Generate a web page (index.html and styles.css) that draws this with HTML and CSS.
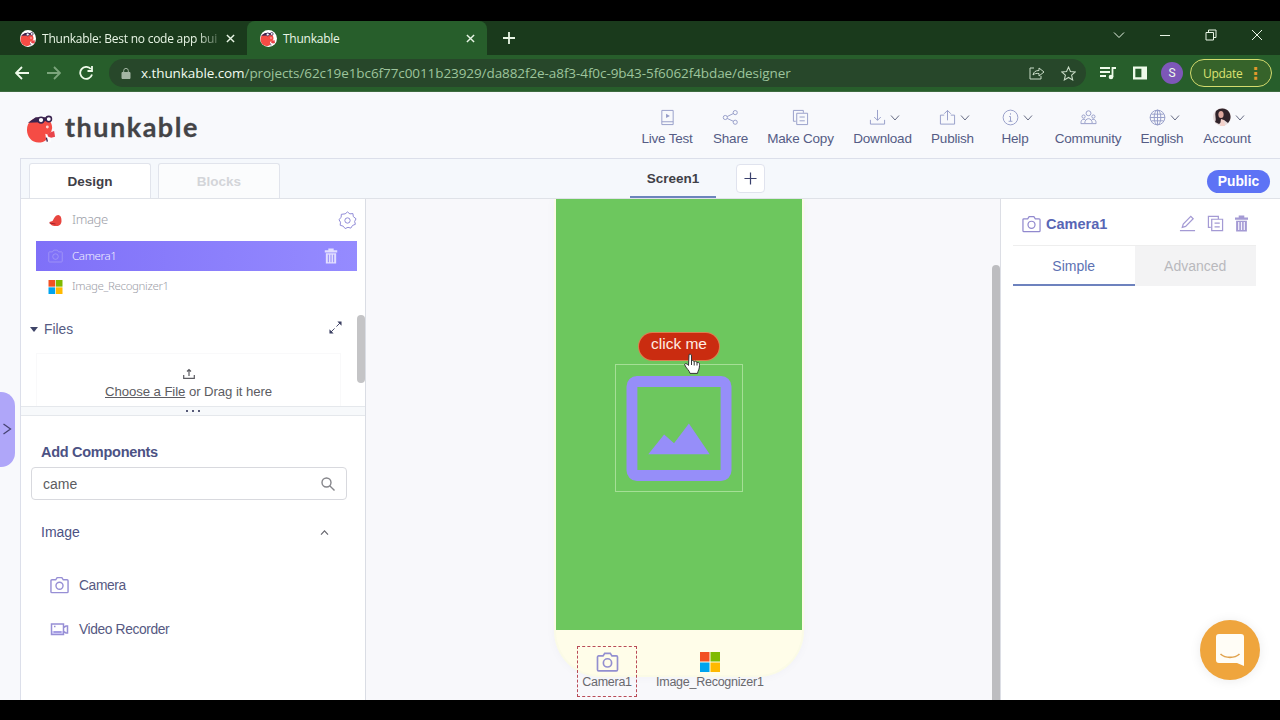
FILE: index.html
```html
<!DOCTYPE html>
<html lang="en">
<head>
  <meta charset="UTF-8">
  <meta name="viewport" content="width=device-width, initial-scale=1.0">
  <title>Thunkable</title>
  <link rel="stylesheet" href="styles.css">
</head>
<body>

  <!-- shared icons -->
  <svg class="sprite">
    <symbol id="beaver" viewBox="0 0 32 32">
      <path d="M1 18C1 10 7 5 15 5c8 0 12 5 12 11l-1 4-4 3-1 5c-2 2-5 3-8 3C6 31 1 25 1 18z" fill="#f54c45"/>
      <path d="M20 22l5 2 1 6-5 1z" fill="#fff"/>
      <path d="M22 23l2-2 5-2 1 6-4 1-3-1z" fill="#e8434a"/>
      <path d="M2 10.500L10 5h14v3l-9 2z" fill="#3a2450"/>
      <circle cx="15.500" cy="7.800" r="3" fill="#fff" stroke="#3a2450" stroke-width="1.600"/>
      <circle cx="23.500" cy="6.800" r="2.800" fill="#fff" stroke="#3a2450" stroke-width="1.600"/>
      <circle cx="22" cy="15" r="1.500" fill="#ffd0d0"/>
      <path d="M21 26l1 4" stroke="#3a2450" stroke-width="1.400"/>
    </symbol>
    <symbol id="camera" viewBox="0 0 20 18">
      <path d="M2 3.500h4l1.500-2.300h5L14 3.500h4a1 1 0 0 1 1 1V16a1 1 0 0 1-1 1H2a1 1 0 0 1-1-1V4.500a1 1 0 0 1 1-1z"/>
      <circle cx="10" cy="9.800" r="3.700"/>
    </symbol>
    <symbol id="chevron" viewBox="0 0 10 8"><path d="M1 1.500l4 4.500 4-4.500"/></symbol>
    <symbol id="close" viewBox="0 0 10 10"><path d="M1 1l8 8M9 1L1 9"/></symbol>
    <symbol id="copy" viewBox="0 0 18 18">
      <path d="M4 13H1.500V1.500H12V4M5 4.500h11.500v12H5zM8 8.500h5.500M8 12.500h5.500"/>
    </symbol>
    <symbol id="trash" viewBox="0 0 14 18">
      <path d="M0 2.500h4V.500h6v2h4v2.500H0zM1.200 6h11.600v11.500H1.200z" fill="currentColor" stroke="none"/>
      <path class="bars" d="M4 7.500v8.500M7 7.500v8.500M10 7.500v8.500"/>
    </symbol>
    <symbol id="windows" viewBox="0 0 20 20">
      <path d="M0 0h9.500v9.500H0z" fill="#f25022"/>
      <path d="M10.500 0H20v9.500h-9.500z" fill="#7fba00"/>
      <path d="M0 10.500h9.500V20H0z" fill="#00a4ef"/>
      <path d="M10.500 10.500H20V20h-9.500z" fill="#ffb900"/>
    </symbol>
  </svg>

  <div class="window">
    <div class="tabstrip">
      <div class="tab">
        <span class="favicon"><svg><use href="#beaver"/></svg></span>
        <span class="tab-title fade">Thunkable: Best no code app bui</span>
        <svg class="tab-close"><use href="#close"/></svg>
      </div>
      <div class="tab active">
        <span class="favicon"><svg><use href="#beaver"/></svg></span>
        <span class="tab-title">Thunkable</span>
        <svg class="tab-close"><use href="#close"/></svg>
      </div>
      <svg class="new-tab" viewBox="0 0 12 12"><path d="M6 0v12M0 6h12"/></svg>
      <div class="controls">
        <svg viewBox="0 0 12 12"><path d="M1 3.500l5 5 5-5"/></svg>
        <svg viewBox="0 0 12 12"><path d="M1 6.500h10"/></svg>
        <svg viewBox="0 0 12 12"><path d="M1 3.500h7.500V11H1zM3.500 3.500V1H11v7.500H8.500"/></svg>
        <svg viewBox="0 0 12 12"><path d="M1 1l10 10M11 1L1 11"/></svg>
      </div>
    </div>

    <div class="toolbar">
      <div class="history">
        <svg viewBox="0 0 14 14"><path d="M14 7H1.500M7 1L1 7l6 6"/></svg>
        <svg class="off" viewBox="0 0 14 14"><path d="M0 7h12.500M7 1l6 6-6 6"/></svg>
        <svg viewBox="0 0 14 14"><path d="M11.800 3A6 6 0 1 0 13 8.500M13 0v5H8.500"/></svg>
      </div>
      <div class="address">
        <svg class="lock" viewBox="0 0 10 12"><path d="M1 5h8v6H1z" fill="#a3b5a3"/><path d="M2.700 5V3.200a2.300 2.300 0 0 1 4.600 0V5"/></svg>
        <span class="url"><b>x.thunkable.com</b>/projects/62c19e1bc6f77c0011b23929/da882f2e-a8f3-4f0c-9b43-5f6062f4bdae/designer</span>
        <svg class="send" viewBox="0 0 16 14"><path d="M5 2H1v11h11v-3M4 9c.500-3 2.500-4.500 6-4.500V2l5 4-5 4V7.500C7.500 7.200 5.500 7.500 4 9z"/></svg>
        <svg class="star" viewBox="0 0 14 14"><path d="M7 1l1.800 4.200 4.500.400-3.400 3 1 4.400L7 10.700 3.100 13l1-4.400-3.400-3 4.500-.400z"/></svg>
      </div>
      <svg class="media" viewBox="0 0 16 14"><path d="M0 2h10M0 6h10M0 10h6M12.500 11V2H16"/><circle cx="11" cy="11" r="2.300"/></svg>
      <svg class="side" viewBox="0 0 15 14"><path d="M0 0h15v14H0zM2.500 2.500v9h6.500v-9z" fill-rule="evenodd"/></svg>
      <span class="profile">S</span>
      <span class="update">Update<i>⋮</i></span>
    </div>

    <div class="app">
      <div class="header">
        <div class="brand">
          <svg class="mascot"><use href="#beaver"/></svg>
          <span>thunkable</span>
        </div>
        <div class="nav">
          <div class="nav-item live">
            <div class="nav-icon"><svg viewBox="0 0 18 18"><path d="M3 1.500h12v15H3zM3 13.500h12"/><path d="M7.500 5v4.500l4-2.200z" fill="#959cc8" stroke="none"/></svg></div>
            <span>Live Test</span>
          </div>
          <div class="nav-item share">
            <div class="nav-icon"><svg viewBox="0 0 18 18"><circle cx="3.500" cy="9" r="2.200"/><circle cx="14" cy="3.800" r="2.200"/><circle cx="14" cy="14" r="2.200"/><path d="M5.500 8l6.500-3.200M5.500 10l6.500 3"/></svg></div>
            <span>Share</span>
          </div>
          <div class="nav-item copy">
            <div class="nav-icon"><svg><use href="#copy"/></svg></div>
            <span>Make Copy</span>
          </div>
          <div class="nav-item download">
            <div class="nav-icon"><svg viewBox="0 0 18 18"><path d="M9 1v11M5.500 8.500L9 12l3.500-3.500M1.500 11.500V16h15v-4.500"/></svg><svg class="chev"><use href="#chevron"/></svg></div>
            <span>Download</span>
          </div>
          <div class="nav-item publish">
            <div class="nav-icon"><svg viewBox="0 0 18 18"><path d="M9 12V1.500M5.500 5L9 1.500 12.500 5M5.500 6.500h-4V16h15V6.500h-4"/></svg><svg class="chev"><use href="#chevron"/></svg></div>
            <span>Publish</span>
          </div>
          <div class="nav-item help">
            <div class="nav-icon"><svg viewBox="0 0 18 18"><circle cx="9" cy="9" r="7.800"/><path d="M7.500 8H9v5M7 13h4M9 4.500v1.500"/></svg><svg class="chev"><use href="#chevron"/></svg></div>
            <span>Help</span>
          </div>
          <div class="nav-item community">
            <div class="nav-icon"><svg viewBox="0 0 18 18"><circle cx="9" cy="4.500" r="2.600"/><circle cx="3.800" cy="8" r="1.700"/><circle cx="14.200" cy="8" r="1.700"/><path d="M5 15.500c0-7 8-7 8 0zM5 15.500H1c0-3 .500-5 4.500-4.500M13 15.500h4c0-3-.500-5-4.500-4.500"/></svg></div>
            <span>Community</span>
          </div>
          <div class="nav-item english">
            <div class="nav-icon"><svg viewBox="0 0 18 18"><circle cx="9" cy="9" r="7.800"/><ellipse cx="9" cy="9" rx="3.500" ry="7.800"/><path d="M9 1.200v15.600M1.200 9h15.600M2.500 5.500h13M2.500 12.500h13"/></svg><svg class="chev"><use href="#chevron"/></svg></div>
            <span>English</span>
          </div>
          <div class="nav-item account">
            <div class="nav-icon">
              <svg class="avatar" viewBox="0 0 18 18"><circle cx="9" cy="9" r="9" fill="#e7dcdc"/><path d="M3 3c4-4 11-3 13 1 3 5 1 9-1 11l-4-3-5 4-4-2c2-3-1-7 1-11z" fill="#30232a"/><ellipse cx="8" cy="6.500" rx="2.600" ry="3.500" fill="#dca79d"/><path d="M7 18l1-7 3 1 1 6z" fill="#f3d2cb"/></svg>
              <svg class="chev"><use href="#chevron"/></svg>
            </div>
            <span>Account</span>
          </div>
        </div>
      </div>

      <div class="workspace">
        <div class="screenbar">
          <div class="mode active">Design</div>
          <div class="mode">Blocks</div>
          <div class="screen-tab">Screen1</div>
          <div class="add-screen"><svg viewBox="0 0 14 14"><path d="M7 .500v13M.500 7h13"/></svg></div>
          <span class="public">Public</span>
        </div>

        <div class="columns">
          <div class="left">
            <div class="tree">
              <div class="tree-row first">
                <svg class="tree-icon" viewBox="0 0 14 14"><path d="M1 9l3-1c1-1 2-6 6-6 3 1 3 4 3 6 0 3-2 5-5 5s-6 0-7-4z" fill="#e8453f"/><path d="M1 10l6 1" stroke="#a82028"/></svg>
                <span>Image</span>
                <svg class="gear" viewBox="0 0 20 20"><path d="M7.500 3L10 1l2.500 2 3.200-.300.400 3.200L19 8.200 17.500 11l.800 3-3 1.200L13.500 18l-3-.800L7.500 18.500 5.500 16l-3.200-1 .300-3.200L1 9l2.300-2.200.2-3.300z"/><circle cx="10" cy="10" r="2.800"/></svg>
              </div>
              <div class="tree-row selected">
                <svg class="tree-icon"><use href="#camera"/></svg>
                <span>Camera1</span>
                <svg class="trash"><use href="#trash"/></svg>
              </div>
              <div class="tree-row last">
                <svg class="tree-icon"><use href="#windows"/></svg>
                <span>Image_Recognizer1</span>
              </div>
              <div class="files">
                <i class="caret"></i>
                <span>Files</span>
                <svg viewBox="0 0 14 14"><path d="M8 6l4.500-4.500M6 8l-4.500 4.500"/><path d="M9 .500h4.500V5zM.500 9v4.500H5z" fill="#3c4063" stroke="none"/></svg>
              </div>
              <div class="dropzone">
                <svg viewBox="0 0 12 11"><path d="M6 8V1.500M4 3.500l2-2 2 2M.700 7v3.300h10.600V7"/></svg>
                <span><u>Choose a File</u> or Drag it here</span>
              </div>
              <div class="thumb"></div>
            </div>
            <div class="splitter"><i></i><i></i><i></i></div>
            <div class="palette">
              <h2>Add Components</h2>
              <div class="search">
                <span>came</span>
                <svg viewBox="0 0 14 14"><circle cx="5.500" cy="5.500" r="4.500"/><path d="M8.700 8.700l4.800 4.800"/></svg>
              </div>
              <div class="group">
                <span>Image</span>
                <svg><use href="#chevron"/></svg>
              </div>
              <div class="component">
                <svg><use href="#camera"/></svg>
                <span>Camera</span>
              </div>
              <div class="component">
                <svg viewBox="0 0 19 18"><path d="M1.500 4h12v10.500h-12zM13.500 7.500L16 6h1.500v7H16l-2.500-1.500zM3.500 12h8M4 6.500h1.500"/><path d="M2 11h11v3H2z" fill="#8a82ef" fill-opacity=".3" stroke="none"/></svg>
                <span>Video Recorder</span>
              </div>
            </div>
          </div>

          <div class="canvas">
            <div class="phone">
              <div class="screen">
                <div class="click-me">click me</div>
                <div class="image-box">
                  <svg viewBox="0 0 106 106"><rect x="5.500" y="5.500" width="95" height="95" rx="5" fill="none" stroke="#968ef9" stroke-width="11"/><path d="M22 79l16-20 10 9 15-20 21 31z" fill="#968ef9" stroke="none"/></svg>
                </div>
              </div>
            </div>
            <div class="invisible">
              <div class="invisible-item picked">
                <svg class="cam"><use href="#camera"/></svg>
                <span>Camera1</span>
              </div>
              <div class="invisible-item">
                <svg><use href="#windows"/></svg>
                <span>Image_Recognizer1</span>
              </div>
            </div>
            <svg class="cursor" viewBox="0 0 18 22"><path d="M6 1.500c1.500-1 2.500 0 2.500 1.500v5l1-.500 1.700 1 1.300-.300 1.500 1.200 1.500 0c1 .600 1 1.600 1 3 0 4-1.500 5-2 8H7c-.500-3-4-5-5.500-9 1-1.500 2.500-.500 4 1z"/><path d="M8.500 8v4M11.200 9v3.500M14 9.500v3"/></svg>
            <div class="canvas-thumb"></div>
          </div>

          <div class="props">
            <div class="props-head">
              <svg class="props-cam"><use href="#camera"/></svg>
              <b>Camera1</b>
              <svg class="tool" viewBox="0 0 18 18"><path d="M3.500 13l1-3.500 8-8 2.500 2.500-8 8zM1 16.500h16"/></svg>
              <svg class="tool"><use href="#copy"/></svg>
              <svg class="tool bin"><use href="#trash"/></svg>
            </div>
            <div class="props-tabs">
              <div class="props-tab active">Simple</div>
              <div class="props-tab">Advanced</div>
            </div>
          </div>
        </div>
      </div>

      <div class="drawer"><svg viewBox="0 0 10 12"><path d="M1.500 1l7 5-7 5"/></svg></div>
      <div class="chat"><svg viewBox="0 0 28 32"><path d="M3 0h22a3 3 0 0 1 3 3v29l-7-3H3a3 3 0 0 1-3-3V3a3 3 0 0 1 3-3z" fill="#fffdf6"/><path d="M4.500 20c5 4.500 14 4.500 19 0"/></svg></div>
    </div>
  </div>

</body>
</html>
```
FILE: styles.css
```css
html, body {
  margin: 0;
  padding: 0;
}

body {
  width: 1280px;
  height: 720px;
  box-sizing: border-box;
  padding: 21px 0 20px;
  background: #000;
  overflow: hidden;
  font-family: "Liberation Sans", Arial, sans-serif;
}

svg {
  display: block;
  flex: none;
  fill: none;
  stroke: currentColor;
}

.sprite {
  position: absolute;
  width: 0;
  height: 0;
}

.window {
  height: 679px;
  display: flex;
  flex-direction: column;
}

/* browser chrome */
.tabstrip {
  height: 34px;
  display: flex;
  align-items: center;
  background: #1a3a1c;
  color: #e8f5e5;
  font: 13px "Open Sans", "Noto Sans", sans-serif;
}

.tab {
  width: 240px;
  height: 34px;
  box-sizing: border-box;
  padding: 0 12px 0 12px;
  display: flex;
  align-items: center;
  border-radius: 8px 8px 0 0;
}

.tab:first-child {
  margin-left: 7px;
}

.tab.active {
  background: #275e2b;
}

.favicon {
  width: 17px;
  height: 17px;
  border-radius: 50%;
  background: #fff;
  overflow: hidden;
  margin-left: 1px;
  margin-right: 6px;
}

.favicon svg {
  width: 16px;
  height: 17px;
  stroke: none;
}

.tab-title {
  flex: 1;
  white-space: nowrap;
  font-size: 12px;
  letter-spacing: -0.250px;
}

.tab-title.fade {
  -webkit-mask-image: linear-gradient(90deg, #000 88%, rgba(0, 0, 0, .3));
  mask-image: linear-gradient(90deg, #000 88%, rgba(0, 0, 0, .3));
}

.tab-close {
  width: 9px;
  height: 9px;
  margin-left: 9px;
  stroke-width: 1.600;
}

.new-tab {
  width: 12px;
  height: 12px;
  margin-left: 16px;
  stroke-width: 1.800;
}

.controls {
  margin-left: auto;
  margin-right: 17px;
  margin-bottom: 6px;
  display: flex;
  gap: 34px;
}

.controls svg {
  width: 12px;
  height: 12px;
}

.toolbar {
  height: 37px;
  box-sizing: border-box;
  padding: 0 8px 0 15px;
  display: flex;
  align-items: center;
  background: #275e2b;
  border-bottom: 1px solid #3d6b40;
  color: #eefbea;
  font-family: "Open Sans", "Noto Sans", sans-serif;
}

.history {
  display: flex;
  gap: 18px;
}

.history svg {
  width: 14px;
  height: 14px;
  stroke-width: 1.800;
}

.history .off {
  color: #7ca57c;
}

.address {
  width: 977px;
  height: 28px;
  margin-left: 16px;
  box-sizing: border-box;
  padding: 0 10px 0 12px;
  display: flex;
  align-items: center;
  border-radius: 14px;
  background: #27472a;
  color: #c9dcc7;
}

.lock {
  width: 10px;
  height: 13px;
  margin-right: 10px;
  color: #a3b5a3;
}

.url {
  flex: 1;
  color: #9dc49c;
  font-size: 13.500px;
  letter-spacing: -0.080px;
  white-space: nowrap;
}

.url b {
  font-weight: 400;
  color: #f2fbf0;
}

.send {
  width: 16px;
  height: 14px;
  margin-right: 16px;
}

.star {
  width: 15px;
  height: 15px;
}

.media {
  width: 16px;
  height: 14px;
  margin-left: 14px;
  stroke-width: 1.800;
}

.media circle, .side {
  fill: #eefbea;
  stroke: none;
}

.side {
  width: 14px;
  height: 14px;
  margin-left: 17px;
}

.profile {
  width: 22px;
  height: 22px;
  margin-left: 14px;
  border-radius: 50%;
  background: #7d57b8;
  text-align: center;
  font: 12px/22px Roboto, sans-serif;
}

.update {
  flex: 1;
  height: 28px;
  box-sizing: border-box;
  margin-left: 7px;
  padding: 0 8px 0 12px;
  display: flex;
  align-items: center;
  justify-content: space-between;
  border: 1px solid #d4dc6e;
  border-radius: 14px;
  background: #36632a;
  color: #dde272;
  font-size: 12px;
  letter-spacing: -0.300px;
}

.update i {
  color: #e29a2c;
  font: bold 16px "DejaVu Sans", sans-serif;
}

/* app header */
.app {
  flex: 1;
  min-height: 0;
  position: relative;
  display: flex;
  flex-direction: column;
  background: #f8f9fc;
}

.header {
  height: 66px;
  display: flex;
  justify-content: space-between;
}

.brand {
  display: flex;
  align-items: center;
  margin: 5px 0 0 26px;
  color: #444447;
  font: bold 27px Lato, sans-serif;
  letter-spacing: 1.500px;
}

.brand span {
  margin-bottom: 2px;
  -webkit-text-stroke: .3px #444447;
}

.mascot {
  width: 31px;
  height: 32px;
  margin-right: 8px;
  stroke: none;
}

.nav {
  display: flex;
  padding: 16px 21px 0 0;
}

.nav-item {
  display: flex;
  flex-direction: column;
  align-items: center;
  gap: 4px;
  width: 75px;
  color: #555c85;
  font-size: 13.500px;
  line-height: 17px;
  letter-spacing: -0.200px;
  white-space: nowrap;
}

.nav-icon {
  height: 18px;
  display: flex;
  align-items: center;
  gap: 4px;
  color: #959cc8;
}

.nav-icon svg {
  width: 17px;
  height: 17px;
}

.nav-icon .chev {
  width: 10px;
  height: 8px;
  margin-top: 2px;
  margin-right: -4px;
  color: #686d85;
}

.nav-icon .avatar {
  width: 18px;
  height: 18px;
  stroke: none;
}

.live { width: 72px; }
.share { width: 55px; }
.copy { width: 85px; }
.download { width: 79px; }
.publish { width: 61px; }
.help { width: 64px; }
.community { width: 82px; }
.english { width: 66px; }
.account { width: 64px; }

/* workspace */
.workspace {
  flex: 1;
  min-height: 0;
  margin-left: 20px;
  display: flex;
  flex-direction: column;
  border: 1px solid #dcdfea;
  border-width: 1px 0 0 1px;
}

.screenbar {
  height: 40px;
  box-sizing: border-box;
  display: flex;
  align-items: flex-end;
  background: #f5f8fc;
  border-bottom: 1px solid #dfe2e8;
}

.mode {
  width: 122px;
  height: 35px;
  box-sizing: border-box;
  margin-left: 8px;
  border: 1px solid #e1e4ec;
  border-bottom: 0;
  border-radius: 3px 3px 0 0;
  background: #fbfcfd;
  color: #d3d5d9;
  text-align: center;
  font: bold 13.500px/36px "Liberation Sans", Arial, sans-serif;
}

.mode + .mode {
  margin-left: 7px;
}

.mode.active {
  background: #fff;
  color: #3f4047;
}

.screen-tab {
  width: 86px;
  height: 37px;
  box-sizing: border-box;
  margin-left: 350px;
  border-bottom: 2px solid #6c85bd;
  color: #3f4047;
  text-align: center;
  font: bold 13.500px/36px "Liberation Sans", Arial, sans-serif;
}

.add-screen {
  width: 29px;
  height: 29px;
  box-sizing: border-box;
  margin: 0 0 5px 20px;
  padding: 7px;
  border: 1px solid #e0e3ee;
  border-radius: 4px;
  background: #fff;
  color: #3a416d;
}

.add-screen svg {
  width: 13px;
  height: 13px;
  stroke-width: 1.300;
}

.public {
  width: 63px;
  height: 23px;
  margin: 0 10px 5px auto;
  border-radius: 12px;
  background: #5d73f5;
  color: #fff;
  text-align: center;
  font: bold 13.800px/24px "Liberation Sans", Arial, sans-serif;
}

.columns {
  flex: 1;
  min-height: 0;
  display: grid;
  grid-template-columns: 345px 1fr 280px;
}

.left {
  box-sizing: border-box;
  min-height: 0;
  display: flex;
  flex-direction: column;
  border-right: 1px solid #dadde4;
  background: #fff;
}

.tree {
  position: relative;
  height: 207px;
  box-sizing: border-box;
  padding-left: 15px;
  overflow: hidden;
}

.tree-row {
  width: 321px;
  height: 30px;
  box-sizing: border-box;
  padding: 0 19px 2px 12px;
  display: flex;
  align-items: center;
  color: #9c9ea8;
  font: 300 11.500px "Noto Sans", sans-serif;
  letter-spacing: -0.350px;
}

.tree-row.first {
  height: 42px;
  padding-right: 0;
  padding-bottom: 0;
  font-size: 13px;
}

.tree-row.first span {
  margin-bottom: 3px;
}

.tree-row.last .tree-icon {
  margin-top: 3px;
}

.tree-icon {
  width: 15px;
  height: 14px;
  margin-right: 9px;
}

.first .tree-icon, .last .tree-icon {
  stroke: none;
}

.gear {
  width: 19px;
  height: 19px;
  margin-left: auto;
  color: #8b86d5;
}

.tree-row.selected {
  background: linear-gradient(90deg, #7f70f8, #958bff);
  color: #f1efff;
}

.selected .tree-icon {
  margin-top: 2px;
  color: #a79cf5;
}

.trash {
  width: 14px;
  height: 16px;
  margin-top: 2px;
  margin-left: auto;
  color: #e2deff;
}

.trash .bars, .selected .trash {
  stroke: #8a7ff7;
}

.files {
  width: 312px;
  height: 28px;
  margin-top: 14px;
  margin-left: -6px;
  display: flex;
  align-items: center;
  color: #555b84;
  font-size: 13.800px;
}

.caret {
  margin-right: 6px;
  border: 4px solid transparent;
  border-top: 5px solid #3f4468;
  border-bottom: 0;
}

.files svg {
  width: 13px;
  height: 13px;
  margin: 0 0 3px auto;
  color: #3c4063;
}

.dropzone {
  width: 305px;
  height: 60px;
  box-sizing: border-box;
  margin-top: 10px;
  padding-top: 14px;
  display: flex;
  flex-direction: column;
  align-items: center;
  gap: 5px;
  border: 1px solid #f9f9fa;
  color: #5c5c62;
  font-size: 13.200px;
  letter-spacing: -0.080px;
}

.dropzone svg {
  width: 12px;
  height: 11px;
  stroke-width: 1.200;
}

.thumb {
  position: absolute;
  right: 0;
  top: 116px;
  width: 8px;
  height: 68px;
  border-radius: 4px;
  background: #c4c4c6;
}

.splitter {
  height: 10px;
  box-sizing: border-box;
  border: 1px solid #e5e8ec;
  border-width: 1px 0;
  background: #f7f9fb;
  display: flex;
  justify-content: center;
  align-items: center;
  gap: 4px;
}

.splitter i {
  width: 2px;
  height: 2px;
  background: #565a78;
}

.palette {
  padding: 26px 18px 0 10px;
  color: #4c5284;
}

.palette h2 {
  margin: 0 0 5px 10px;
  font-size: 14.500px;
  line-height: 20px;
  letter-spacing: -0.280px;
}

.search {
  height: 33px;
  box-sizing: border-box;
  padding: 0 11px 0 11px;
  display: flex;
  align-items: center;
  justify-content: space-between;
  border: 1px solid #d8d9de;
  border-radius: 4px;
  color: #5c5c61;
  font-size: 14px;
}

.search svg {
  width: 14px;
  height: 14px;
  color: #85858a;
  stroke-width: 1.400;
}

.group {
  height: 20px;
  margin: 22px 18px 21px 10px;
  display: flex;
  align-items: center;
  justify-content: space-between;
  font-size: 14px;
}

.group svg {
  width: 9px;
  height: 7px;
  transform: rotate(180deg);
  color: #65656d;
  stroke-width: 1.300;
}

.component {
  height: 44px;
  padding-left: 19px;
  display: flex;
  align-items: center;
  gap: 10px;
  color: #565982;
  font-size: 13.800px;
  letter-spacing: -0.380px;
}

.component svg {
  width: 19px;
  height: 18px;
  color: #978fd5;
  stroke-width: 1.500;
}

/* phone preview */
.canvas {
  position: relative;
  overflow: hidden;
  background: #f8f8fb;
}

.phone {
  width: 246px;
  height: 476px;
  box-sizing: border-box;
  margin-left: 190px;
  border-radius: 0 0 44px 44px;
  background: #fffde9;
  box-shadow: 0 0 0 2px #fbfbe6, 0 0 12px rgba(60, 60, 120, .05);
}

.screen {
  height: 431px;
  padding-top: 134px;
  box-sizing: border-box;
  background: #6dc75e;
}

.click-me {
  width: 80px;
  height: 27px;
  margin: 0 auto 4px;
  border-radius: 14px;
  background: #ca2c10;
  box-shadow: 0 0 0 1px #dc8050;
  color: #ffece3;
  text-align: center;
  font-size: 15.500px;
  line-height: 22px;
}

.image-box {
  width: 128px;
  height: 128px;
  box-sizing: border-box;
  margin: 0 auto;
  padding: 11px 10px;
  border: 1px solid #a5df96;
}

.image-box svg {
  width: 106px;
  height: 105px;
}

.invisible {
  position: absolute;
  left: 211px;
  top: 447px;
  display: flex;
  gap: 19px;
}

.invisible-item {
  height: 51px;
  box-sizing: border-box;
  padding-top: 6px;
  display: flex;
  flex-direction: column;
  align-items: center;
  gap: 3px;
  color: #69696e;
  font-size: 12.500px;
  letter-spacing: -0.250px;
}

.invisible-item svg {
  width: 20px;
  height: 20px;
  stroke: none;
}

.invisible-item.picked {
  width: 60px;
  padding-top: 5px;
  border: 1px dashed #b94b57;
}

.invisible-item .cam {
  width: 23px;
  stroke: #938fd0;
  stroke-width: 1.500;
}

.cursor {
  position: absolute;
  left: 317px;
  top: 154px;
  width: 18px;
  height: 22px;
  fill: #fff;
  stroke: #333;
}

.canvas-thumb {
  position: absolute;
  right: 0;
  top: 66px;
  width: 8px;
  height: 450px;
  border-radius: 4px;
  background: #bdbdc0;
}

/* properties */
.props {
  box-sizing: border-box;
  padding: 0 24px 0 12px;
  border-left: 1px solid #dcdee5;
  background: #fff;
}

.props-head {
  height: 47px;
  box-sizing: border-box;
  padding: 3px 8px 0 9px;
  display: flex;
  align-items: center;
  border-bottom: 1px solid #eee;
  color: #5866b5;
  font-size: 14.500px;
}

.props-cam {
  width: 19px;
  height: 18px;
  margin-right: 5px;
  color: #9189ce;
  stroke-width: 1.300;
}

.props-head b {
  flex: 1;
}

.tool {
  width: 17px;
  height: 17px;
  margin-left: 11px;
  color: #a49ad4;
  stroke-width: 1.300;
}

.bin {
  width: 13px;
  height: 17px;
  stroke: #f5f3fd;
}

.props-tabs {
  display: grid;
  grid-template-columns: 1fr 1fr;
}

.props-tab {
  height: 40px;
  box-sizing: border-box;
  background: #f3f3f4;
  color: #b9b9bd;
  text-align: center;
  font-size: 14px;
  line-height: 40px;
}

.props-tab.active {
  background: #fff;
  border-bottom: 2px solid #6d82be;
  color: #5d72b3;
}

/* floating bits */
.drawer {
  position: absolute;
  left: 0;
  top: 300px;
  width: 15px;
  height: 75px;
  box-sizing: border-box;
  padding: 31px 0 0 2px;
  border-radius: 0 14px 14px 0;
  background: #afa6f9;
  color: #464372;
}

.drawer svg {
  width: 10px;
  height: 12px;
  stroke-width: 1.300;
}

.chat {
  position: absolute;
  right: 20px;
  bottom: 20px;
  width: 60px;
  height: 60px;
  box-sizing: border-box;
  padding: 14px 16px;
  border-radius: 50%;
  background: #efa53d;
  box-shadow: 0 1px 12px rgba(0, 0, 0, .08);
}

.chat svg {
  width: 28px;
  height: 32px;
  stroke: none;
}

.chat path + path {
  stroke: #e0a24c;
  stroke-width: 1.600;
}
```
